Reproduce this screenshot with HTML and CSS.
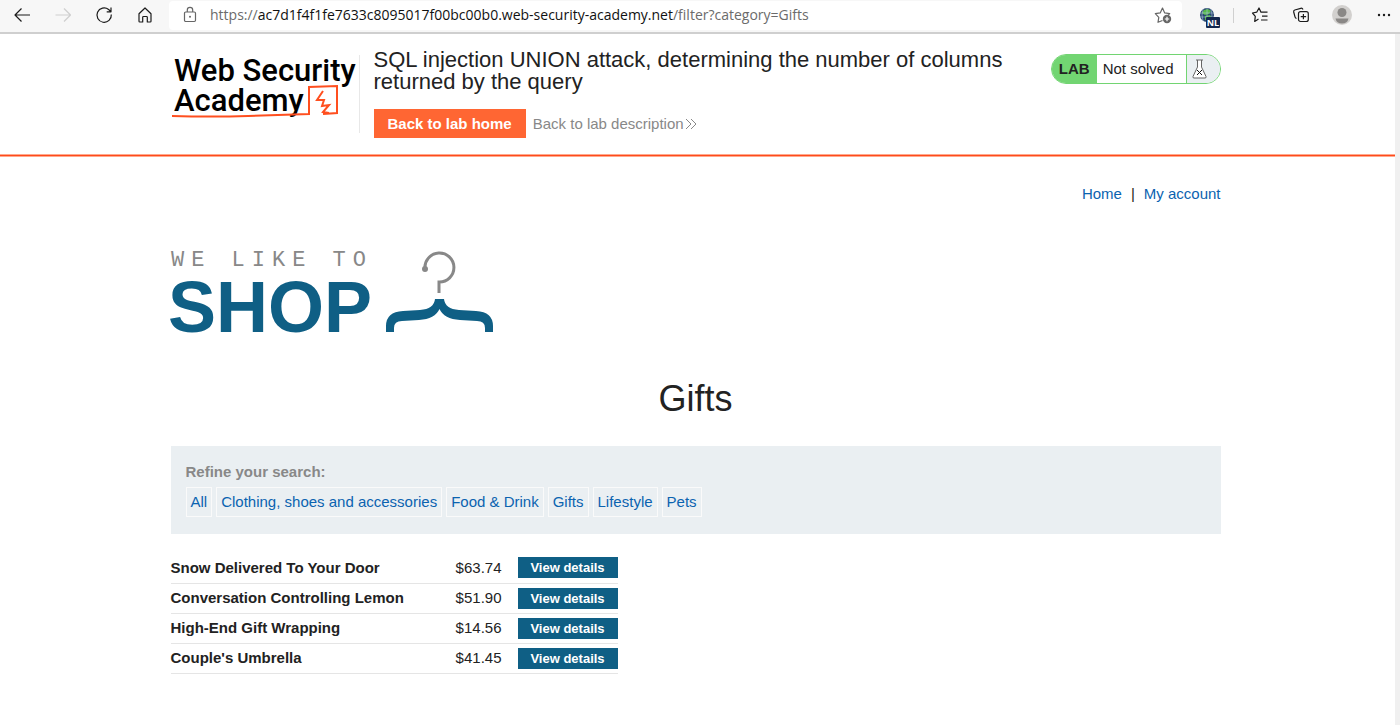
FILE: index.html
```html
<!DOCTYPE html>
<html lang="en">
<head>
    <meta charset="utf-8">
    <title>SQL injection UNION attack, determining the number of columns returned by the query</title>
    <link rel="stylesheet" href="styles.css">
</head>
<body>
<div class="toolbar">
    <button class="tool" aria-label="Back">
        <svg width="20" height="20" viewBox="0 0 20 20"><path d="M18 10H3M9.500 3.500 3 10l6.500 6.500"/></svg>
    </button>
    <button class="tool disabled" aria-label="Forward">
        <svg width="20" height="20" viewBox="0 0 20 20"><path d="M2.500 10h15M11 3.500l6.500 6.500-6.500 6.500"/></svg>
    </button>
    <button class="tool" aria-label="Refresh">
        <svg width="20" height="20" viewBox="0 0 20 20"><path d="M17.300 9.500A7.200 7.200 0 1 1 14.600 4.500l2.200 2M17 2.500v4.300h-4.300"/></svg>
    </button>
    <button class="tool" aria-label="Home">
        <svg width="20" height="20" viewBox="0 0 20 20"><path d="M4 8.700 10 3l6 5.700v7.500q0 .8-.8.8h-2.900v-4.700q0-.8-.8-.8h-3q-.8 0-.8.8V17H4.800q-.8 0-.8-.8z"/></svg>
    </button>
    <div class="address">
        <svg class="lock" width="20" height="20" viewBox="0 0 20 20"><rect x="4.500" y="7" width="11" height="9.500" rx="1.200"/><path d="M7.300 7V5a2.700 2.700 0 0 1 5.400 0V7"/><circle class="solid" cx="10" cy="11.700" r="1"/></svg>
        <div class="url" contenteditable="true" role="textbox" aria-label="Address" spellcheck="false">https://<span class="host">ac7d1f4f1fe7633c8095017f00bc00b0.web-security-academy.net</span>/filter?category=Gifts</div>
        <button class="star" aria-label="Add to favorites">
            <svg width="20" height="20" viewBox="0 0 20 20"><path d="M9.500 15.500 5 17.300l.8-5L2.300 8.700l4.900-.8L9.500 3l2.200 4.900 5 .8-1.500 1.500"/><circle class="solid" cx="14" cy="14" r="4.200"/><path class="plus" d="M14 11.800v4.400M11.800 14h4.400"/></svg>
        </button>
    </div>
    <button class="tool globe" aria-label="Extension">
        <svg width="24" height="24" viewBox="0 0 24 24"><circle class="sea" cx="9" cy="10" r="7"/><path class="land" d="M6 5l4-1 3 2-2 3-4 1-3-2zM7 11l5-1 2 3-3 3-4-1z"/><path class="grid-lines" d="M2 8h14M2 12h14M9 3v14M5 4q-2 6 0 12M13 4q2 6 0 12"/><rect class="flag" x="8" y="12" width="14" height="11" rx="1"/><text x="15" y="21">NL</text></svg>
    </button>
    <span class="separator"></span>
    <button class="tool" aria-label="Favorites">
        <svg width="20" height="20" viewBox="0 0 20 20"><path d="M8.500 14 4.700 16.400l.6-5L2.500 8l4.200-.8L9 3l2 4.200h6.500M12 11.200h5.500M11 15h6.500"/></svg>
    </button>
    <button class="tool" aria-label="Collections">
        <svg width="20" height="20" viewBox="0 0 20 20"><path d="M5.500 13.500q-1.200-.4-1.500-1.600L2.700 7q-.4-1.500 1.100-2l6-1.700q1.500-.4 2.200 1.200"/><rect x="7.500" y="6.700" width="9.800" height="9.800" rx="2"/><path d="M12.400 8.900v5.400M9.700 11.600h5.400"/></svg>
    </button>
    <button class="tool avatar" aria-label="Profile">
        <svg width="20" height="20" viewBox="0 0 20 20"><circle class="back" cx="10" cy="10" r="10"/><circle cx="10" cy="7.500" r="4.500"/><path d="M3.500 13.500h13q-1 5-6.500 5t-6.500-5z"/></svg>
    </button>
    <button class="tool dots" aria-label="Settings and more">
        <svg width="20" height="20" viewBox="0 0 20 20"><circle cx="8" cy="10" r="1.200"/><circle cx="13" cy="10" r="1.200"/><circle cx="18" cy="10" r="1.200"/></svg>
    </button>
</div>

<div class="page">
    <header class="lab-header">
        <div class="container header-row">
            <a class="academy-logo" href="#" aria-label="Web Security Academy">
                <svg width="188" height="78" viewBox="0 0 188 78">
                    <text x="3" y="26">Web Security</text>
                    <text x="3" y="56">Academy</text>
                    <path class="scribble" d="M1 61q40 1 76 0 30-1 61-2V32l28-1v27l-14 1"/>
                    <path class="bolt" d="M152 36l-6 9 7 0-2 6 7-1-6 7 6 1"/>
                </svg>
            </a>
            <div class="title-box">
                <h2>SQL injection UNION attack, determining the number of columns returned by the query</h2>
                <div class="lab-links">
                    <a class="lab-home" href="#">Back to lab home</a>
                    <a class="lab-description" href="#">Back to lab description<svg width="12" height="12" viewBox="0 0 12 12"><path d="M1 1l5 5-5 5M6 1l5 5-5 5"/></svg></a>
                </div>
            </div>
            <div class="lab-status">
                <span class="lab-tag">LAB</span>
                <span class="lab-state">Not solved</span>
                <span class="lab-flask">
                    <svg width="18" height="22" viewBox="0 0 18 22"><path d="M5 2h7M6.500 2v7L2 18.500q-.5 1.500 1 1.500h11q1.500 0 1-1.500L10.500 9V2"/><path class="cross" d="M6 12l5 5M11 12l-5 5"/></svg>
                </span>
            </div>
        </div>
    </header>

    <main>
        <div class="container">
            <nav class="account-links">
                <a href="#">Home</a>
                <span>|</span>
                <a href="#">My account</a>
            </nav>

            <svg class="shop-logo" width="324" height="90" viewBox="0 0 324 90">
                <text class="tagline" x="0" y="20">WE LIKE TO</text>
                <text class="shop" x="-3" y="86">SHOP</text>
                <circle class="hook-end" cx="254" cy="23" r="3"/>
                <path class="hook" d="M254 23A14.500 14.500 0 1 1 268 36V47"/>
                <path class="hanger" d="M264 53h9q1 10 15 11l17 1q17 1 17 15v6h-8v-4q0-7-8-7l-17-1q-16-1-20.500-11-4.500 10-20.500 11l-17 1q-8 0-8 7v4h-8v-6q0-14 17-15l17-1q14-1 15-11z"/>
            </svg>

            <h1>Gifts</h1>

            <section class="search-filters">
                <h3>Refine your search:</h3>
                <div class="filters">
                    <a href="#">All</a>
                    <a href="#">Clothing, shoes and accessories</a>
                    <a href="#">Food &amp; Drink</a>
                    <a href="#">Gifts</a>
                    <a href="#">Lifestyle</a>
                    <a href="#">Pets</a>
                </div>
            </section>

            <table class="products">
                <tr>
                    <th>Snow Delivered To Your Door</th>
                    <td>$63.74</td>
                    <td class="action"><a class="details" href="#">View details</a></td>
                </tr>
                <tr>
                    <th>Conversation Controlling Lemon</th>
                    <td>$51.90</td>
                    <td class="action"><a class="details" href="#">View details</a></td>
                </tr>
                <tr>
                    <th>High-End Gift Wrapping</th>
                    <td>$14.56</td>
                    <td class="action"><a class="details" href="#">View details</a></td>
                </tr>
                <tr>
                    <th>Couple's Umbrella</th>
                    <td>$41.45</td>
                    <td class="action"><a class="details" href="#">View details</a></td>
                </tr>
            </table>
        </div>
    </main>
</div>
</body>
</html>
```
FILE: styles.css
```css
* {
    box-sizing: border-box;
}
body {
    margin: 0;
    min-height: 100vh;
    display: flex;
    flex-direction: column;
    font-family: "Liberation Sans", Arial, sans-serif;
    font-size: 15px;
    line-height: 20px;
    color: #222;
    background: #fff;
}
a {
    color: #0b63b0;
    text-decoration: none;
}

/* browser toolbar */
.toolbar {
    display: flex;
    align-items: center;
    height: 34px;
    padding: 0 0 2px 1px;
    background: #f7f7f7;
    border-bottom: 2px solid #cfcfcf;
}
button {
    padding: 0;
    border: 0;
    background: none;
}
.tool {
    display: flex;
    align-items: center;
    justify-content: center;
    flex: 0 0 auto;
    width: 41px;
    height: 30px;
}
.toolbar svg {
    fill: none;
    stroke: #1b1b1b;
    stroke-width: 1.2;
    stroke-linejoin: round;
}
.toolbar .disabled svg {
    stroke: #cfcfcf;
}
.address {
    flex: 1;
    min-width: 0;
    display: flex;
    align-items: center;
    height: 29px;
    margin: 0 7px 0 4px;
    padding: 0 9px 0 11px;
    background: #fff;
    border-radius: 4px;
}
.address svg {
    display: block;
    stroke: #666;
}
.address .solid {
    fill: #666;
    stroke: none;
}
.address .plus {
    stroke: #fff;
}
.url {
    flex: 1;
    min-width: 0;
    margin-left: 10px;
    overflow: hidden;
    white-space: nowrap;
    outline: none;
    font-family: "Open Sans", "Noto Sans", sans-serif;
    font-size: 14px;
    color: #6b6b6b;
}
.host {
    color: #111;
}
.globe svg {
    margin-top: 4px;
    stroke: none;
}
.globe .sea {
    fill: #27456f;
}
.globe .land {
    fill: #54b948;
}
.globe .grid-lines {
    stroke: #a9c3d6;
    stroke-width: 0.6;
}
.globe .flag {
    fill: #14284f;
}
.globe text {
    fill: #fff;
    font: bold 9px "Open Sans", sans-serif;
    text-anchor: middle;
}
.separator {
    width: 1px;
    height: 15px;
    margin: 0 5px 0 3px;
    background: #d0d0d0;
}
.avatar svg {
    fill: #8a8886;
    stroke: none;
}
.avatar .back {
    fill: #d2d0ce;
}
.dots {
    width: 38px;
}
.dots svg {
    fill: #1b1b1b;
    stroke: none;
}

/* page */
.page {
    flex: 1;
    border-right: 5px solid #f0f0f0;
}
main {
    padding-right: 4px;
}
.container {
    width: 1050px;
    max-width: 100%;
    margin: 0 auto;
}
.lab-header {
    padding: 15px 4px 17px 0;
    border-bottom: 1px solid #ff4a1c;
    box-shadow: 0 1px #ffa88c, inset 0 -1px #ffa88c;
}
.header-row {
    display: flex;
    align-items: flex-start;
}
.academy-logo {
    display: block;
    margin-top: 6px;
    border-right: 1px solid #e8e8e8;
}
.academy-logo svg {
    display: block;
    overflow: visible;
}
.academy-logo text {
    font-family: Roboto, sans-serif;
    font-weight: 500;
    font-size: 31px;
    fill: #000;
}
.scribble,
.bolt {
    fill: none;
    stroke: #ff4f1f;
    stroke-width: 2;
}
.title-box {
    flex: 1;
    padding-left: 14px;
}
h2 {
    max-width: 650px;
    margin: 0 0 16px;
    font-size: 22px;
    line-height: 22px;
    font-weight: normal;
}
.lab-links {
    display: flex;
    align-items: center;
    gap: 7px;
}
.lab-home {
    padding: 0 14px;
    line-height: 29px;
    font-weight: bold;
    color: #fff;
    background: #ff6633;
}
.lab-description {
    color: #888;
}
.lab-description svg {
    margin-left: 1px;
    fill: none;
    stroke: #888;
    vertical-align: -1px;
}
.lab-status {
    display: flex;
    height: 30px;
    margin-top: 5px;
    line-height: 28px;
    border: 1px solid #72d572;
    border-radius: 15px;
    overflow: hidden;
}
.lab-tag {
    padding: 0 7px;
    font-weight: bold;
    background: #72d572;
}
.lab-state {
    padding: 0 12px 0 6px;
}
.lab-flask {
    display: flex;
    align-items: center;
    width: 34px;
    padding-left: 4px;
    background: #eaeff2;
    border-left: 1px solid #72d572;
}
.lab-flask svg {
    fill: #fff;
    stroke: #666;
}
.lab-flask .cross {
    stroke: #111;
}
.account-links {
    display: flex;
    justify-content: flex-end;
    gap: 9px;
    padding-top: 28px;
}
.shop-logo {
    display: block;
    margin-top: 42px;
    overflow: visible;
}
.tagline {
    font-family: "Liberation Mono", monospace;
    font-size: 22px;
    letter-spacing: 7px;
    fill: #888;
}
.shop {
    font-weight: bold;
    font-size: 72px;
    fill: #0f5f85;
}
.hook {
    fill: none;
    stroke: #888;
    stroke-width: 3;
}
.hook-end {
    fill: #888;
}
.hanger {
    fill: #0f5f85;
}
h1 {
    margin: 43px 0 27px;
    font-size: 36px;
    line-height: 40px;
    font-weight: normal;
    text-align: center;
}
.search-filters {
    padding: 16px 15px 17px;
    background: #eaeff2;
}
h3 {
    margin: 0 0 5px;
    font-size: 15px;
    line-height: 20px;
    color: #888;
}
.filters {
    display: flex;
    gap: 4px;
}
.filters a {
    padding: 0 4px;
    line-height: 28px;
    border: 1px solid #fafafa;
}
.products {
    width: 447px;
    margin-top: 19px;
    border-collapse: collapse;
}
.products th,
.products td {
    height: 30px;
    padding: 0;
    border-bottom: 1px solid #e5e5e5;
}
.products th {
    text-align: left;
}
.products td {
    text-align: right;
}
.products .action {
    width: 116px;
}
.details {
    display: block;
    width: 100px;
    margin-left: auto;
    font-size: 13px;
    line-height: 21px;
    font-weight: bold;
    text-align: center;
    color: #fff;
    background: #0f5f85;
}
```
